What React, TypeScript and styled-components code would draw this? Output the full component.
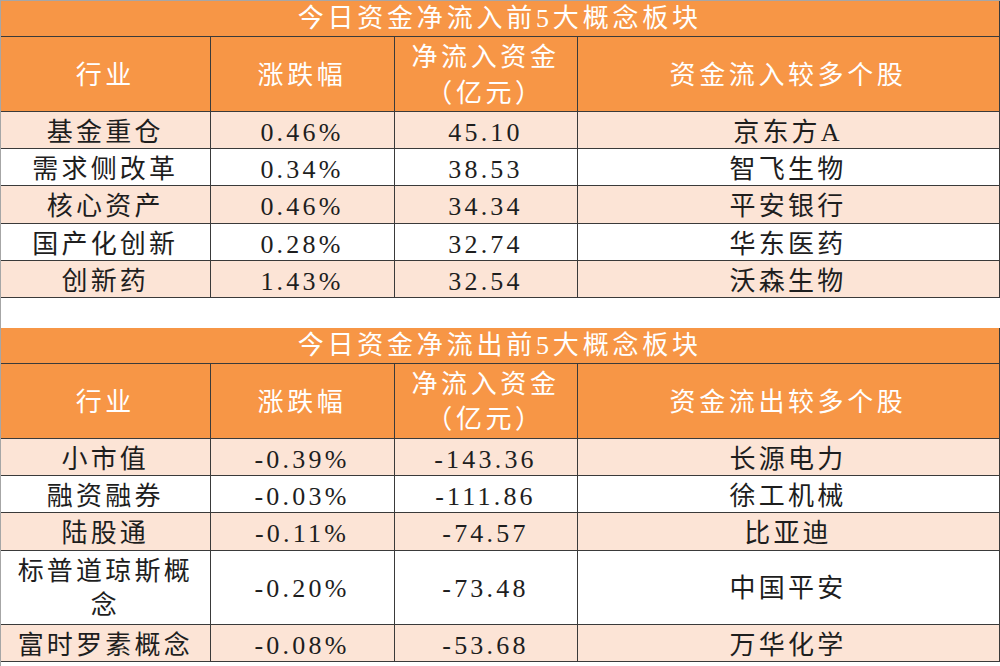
import React from "react";
import styled, { createGlobalStyle } from "styled-components";

const GlobalStyle = createGlobalStyle`
  html, body { margin: 0; padding: 0; background: #ffffff; }
  body { width: 1000px; height: 666px; overflow: hidden; }
`;

const Page = styled.div`
  box-sizing: border-box;
  width: 1000px;
  height: 666px;
  border-top: 1px solid #a6a6a6;
  border-left: 1px solid #a6a6a6;
  background: #ffffff;
  display: flex;
  flex-direction: column;
  gap: 30px;
  font-family: "Liberation Serif", "Noto Sans CJK SC", serif;
`;

const Table = styled.table`
  width: 998px;
  border-collapse: collapse;
  table-layout: fixed;
`;

const TitleCell = styled.th`
  height: 34px;
  padding: 1px 0 0;
  background: #f79646;
  color: #ffffff;
  font-size: 26px;
  font-weight: 400;
  letter-spacing: 3.8px;
  line-height: 32px;
  text-align: center;
  border-bottom: 1px solid #3a3a3a;
  border-right: 1px solid #3a3a3a;
`;

const HeadCell = styled.th`
  height: 70px;
  padding: 3px 0 0;
  background: #f79646;
  color: #ffffff;
  font-size: 26px;
  font-weight: 400;
  letter-spacing: 3.6px;
  line-height: 35.5px;
  text-align: center;
  vertical-align: middle;
  border: 1px solid #3a3a3a;
  border-left-width: 0;
`;

const Row = styled.tr<{ $alt: boolean }>`
  background: ${(p) => (p.$alt ? "#ffffff" : "#fce4d6")};
`;

const Cell = styled.td<{ $tall?: boolean; $wrap?: boolean }>`
  height: ${(p) => (p.$tall ? "69.5px" : "30.2px")};
  padding: ${(p) => (p.$tall ? "4px 0 0" : "6px 0 0")};
  color: #1e1e1e;
  font-size: 26px;
  letter-spacing: 3.2px;
  line-height: ${(p) => (p.$tall ? "34.7px" : "28px")};
  text-align: center;
  vertical-align: middle;
  border: 1px solid #3a3a3a;
  border-left-width: 0;
  white-space: ${(p) => (p.$wrap ? "normal" : "nowrap")};
`;

type Item = { name: React.ReactNode; pct: string; amt: string; stock: string; tall?: boolean };

const inflow: Item[] = [
  { name: "基金重仓", pct: "0.46%", amt: "45.10", stock: "京东方A" },
  { name: "需求侧改革", pct: "0.34%", amt: "38.53", stock: "智飞生物" },
  { name: "核心资产", pct: "0.46%", amt: "34.34", stock: "平安银行" },
  { name: "国产化创新", pct: "0.28%", amt: "32.74", stock: "华东医药" },
  { name: "创新药", pct: "1.43%", amt: "32.54", stock: "沃森生物" },
];

const outflow: Item[] = [
  { name: "小市值", pct: "-0.39%", amt: "-143.36", stock: "长源电力" },
  { name: "融资融券", pct: "-0.03%", amt: "-111.86", stock: "徐工机械" },
  { name: "陆股通", pct: "-0.11%", amt: "-74.57", stock: "比亚迪" },
  {
    name: (
      <>
        标普道琼斯概
        <br />念
      </>
    ),
    pct: "-0.20%",
    amt: "-73.48",
    stock: "中国平安",
    tall: true,
  },
  { name: "富时罗素概念", pct: "-0.08%", amt: "-53.68", stock: "万华化学" },
];

function FlowTable({ title, stockHead, rows }: { title: string; stockHead: string; rows: Item[] }) {
  return (
    <Table>
      <colgroup>
        <col style={{ width: 209 }} />
        <col style={{ width: 184 }} />
        <col style={{ width: 183 }} />
        <col style={{ width: 422 }} />
      </colgroup>
      <thead>
        <tr>
          <TitleCell colSpan={4}>{title}</TitleCell>
        </tr>
        <tr>
          <HeadCell>行业</HeadCell>
          <HeadCell>涨跌幅</HeadCell>
          <HeadCell>
            净流入资金
            <br />
            （亿元）
          </HeadCell>
          <HeadCell>{stockHead}</HeadCell>
        </tr>
      </thead>
      <tbody>
        {rows.map((r, i) => (
          <Row key={i} $alt={i % 2 === 1}>
            <Cell $tall={r.tall} $wrap>{r.name}</Cell>
            <Cell $tall={r.tall}>{r.pct}</Cell>
            <Cell $tall={r.tall}>{r.amt}</Cell>
            <Cell $tall={r.tall}>{r.stock}</Cell>
          </Row>
        ))}
      </tbody>
    </Table>
  );
}

export default function App() {
  return (
    <>
      <GlobalStyle />
      <Page>
        <FlowTable title="今日资金净流入前5大概念板块" stockHead="资金流入较多个股" rows={inflow} />
        <FlowTable title="今日资金净流出前5大概念板块" stockHead="资金流出较多个股" rows={outflow} />
      </Page>
    </>
  );
}
